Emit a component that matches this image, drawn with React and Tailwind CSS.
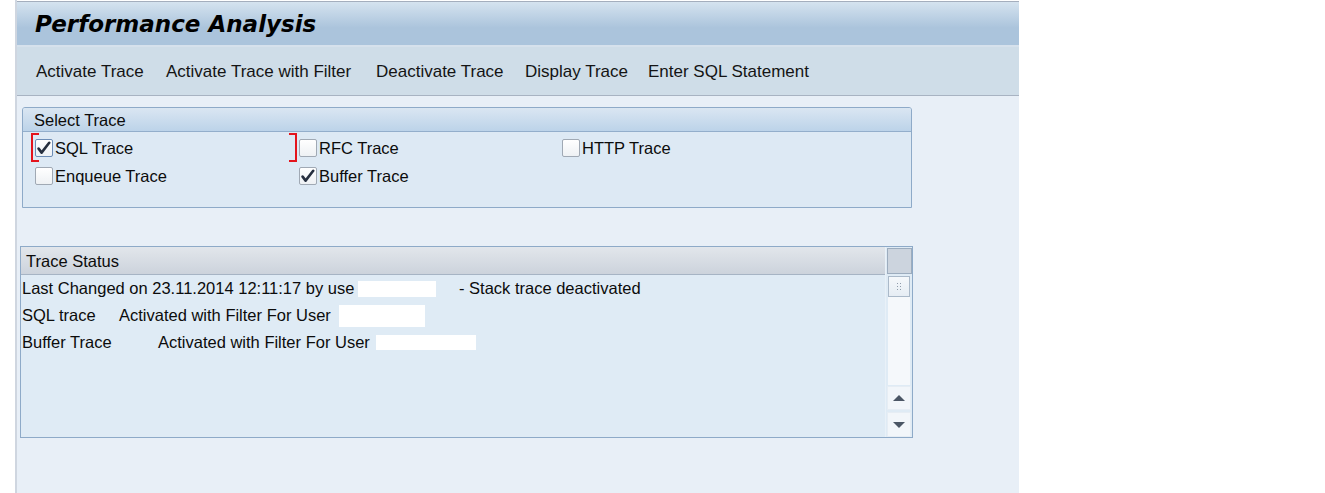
import React from "react";

function Check() {
  return (
    <svg width="14" height="14" viewBox="0 0 14 14" className="block">
      <path d="M1.6 7.6 L4.6 11.6 L12.2 1.8" fill="none" stroke="#262f3f" strokeWidth="2.6" strokeLinecap="round" strokeLinejoin="round" />
    </svg>
  );
}

function Checkbox({ checked, focused }) {
  return (
    <span
      className={
        focused
          ? "w-[18px] h-[18px] shrink-0 rounded-[2px] border border-[#6d8db6] bg-linear-to-b from-white to-[#edf1f5] flex items-center justify-center"
          : "w-[18px] h-[18px] shrink-0 rounded-[2px] border border-[#a0a9b4] bg-linear-to-b from-white to-[#eef1f4] flex items-center justify-center"
      }
    >
      {checked && <Check />}
    </span>
  );
}

function Option({ label, checked, focused }) {
  return (
    <div className="h-[18px] flex items-center">
      <Checkbox checked={checked} focused={focused} />
      <span className="ml-[2px] leading-[18px] whitespace-nowrap">{label}</span>
    </div>
  );
}

function Toolbar() {
  const items = [
    ["Activate Trace", "w-[130px]"],
    ["Activate Trace with Filter", "w-[210px]"],
    ["Deactivate Trace", "w-[149px]"],
    ["Display Trace", "w-[123px]"],
    ["Enter SQL Statement", "w-[200px]"],
  ];
  return (
    <div className="h-[49px] shrink-0 bg-[#cfdde8] border-b border-[#a8b3c2] flex items-center pl-[19px] pt-[1px] text-[#141414] text-[17px]">
      {items.map(([t, w]) => (
        <span key={t} className={w + " whitespace-nowrap leading-[20px]"}>
          {t}
        </span>
      ))}
    </div>
  );
}

function Scrollbar() {
  return (
    <div className="w-[27px] shrink-0 flex flex-col items-center border-l border-[#e9f1f8]">
      <div className="mt-[1px] h-[26px] w-[25px] border border-[#9cacbe] bg-[#ccd4de]" />
      <div className="mt-[2px] h-[21px] w-[22px] border border-[#aab9c9] bg-linear-to-b from-[#f5f8fb] to-[#e6edf4] flex items-center justify-center">
        <div className="grid grid-cols-2 gap-x-[2px] gap-y-[2px]">
          <span className="w-[1px] h-[1px] bg-[#8f9baa]" />
          <span className="w-[1px] h-[1px] bg-[#8f9baa]" />
          <span className="w-[1px] h-[1px] bg-[#8f9baa]" />
          <span className="w-[1px] h-[1px] bg-[#8f9baa]" />
          <span className="w-[1px] h-[1px] bg-[#8f9baa]" />
          <span className="w-[1px] h-[1px] bg-[#8f9baa]" />
        </div>
      </div>
      <div className="h-[88px] w-[22px] bg-[#f5f8fb]" />
      <div className="mt-[1px] h-[24px] w-[24px] bg-[#f2f6fa] border border-[#e6edf4] flex items-center justify-center">
        <svg width="12" height="6" viewBox="0 0 12 6" className="block">
          <path d="M0 6 L6 0 L12 6 Z" fill="#4b5665" />
        </svg>
      </div>
      <div className="mt-[2px] h-[25px] w-[24px] bg-[#f2f6fa] border border-[#e6edf4] flex items-center justify-center">
        <svg width="12" height="6" viewBox="0 0 12 6" className="block">
          <path d="M0 0 L12 0 L6 6 Z" fill="#4b5665" />
        </svg>
      </div>
    </div>
  );
}

export default function App() {
  return (
    <div className="w-[1325px] h-[493px] bg-white flex overflow-hidden font-['Liberation_Sans',Arial,sans-serif] text-[16.5px] text-[#0c0c0c]">
      <div className="w-[15px] shrink-0" />
      <div className="w-[1004px] shrink-0 h-full flex flex-col bg-[#e8eff7] border-l-2 border-[#cfd6e0]">
        <div className="h-[1px] shrink-0 bg-white" />
        <div className="h-[46px] shrink-0 border-t border-[#a4aebd] border-b-2 border-b-[#d6e1ec] bg-linear-to-b from-[#d5e3ef] to-[#abc4dc] to-60% flex items-center pl-[18px] pt-[1px]">
          <h1 className="font-['DejaVu_Sans',sans-serif] font-bold italic text-[23px] leading-[27px] text-black whitespace-nowrap">
            Performance Analysis
          </h1>
        </div>
        <Toolbar />

        {/* Select Trace */}
        <div className="ml-[5px] mt-[11px] w-[890px] h-[101px] shrink-0 border border-[#8eaac8] rounded-t-[3px] bg-[#dde9f4] flex flex-col">
          <div className="h-[24px] shrink-0 border-b border-[#93aecb] bg-linear-to-b from-[#dae6f2] to-[#bcd3e9] rounded-t-[2px] pl-[11px] flex items-center leading-[20px]">
            Select Trace
          </div>
          <div className="relative pt-[7px] pl-[12px]">
            <div className="grid grid-cols-[264px_263px_264px] gap-y-[10px]">
              <Option label="SQL Trace" checked focused />
              <Option label="RFC Trace" />
              <Option label="HTTP Trace" />
              <Option label="Enqueue Trace" />
              <Option label="Buffer Trace" checked />
            </div>
            {/* focus brackets */}
            <div className="absolute left-[8px] top-[1px] w-[266px] h-[29px] pointer-events-none">
              <div className="absolute left-0 top-0 w-[2px] h-full bg-[#e4141c]" />
              <div className="absolute left-0 top-0 w-[8px] h-[2px] bg-[#e4141c]" />
              <div className="absolute left-0 bottom-0 w-[8px] h-[2px] bg-[#e4141c]" />
              <div className="absolute right-0 top-0 w-[2px] h-full bg-[#e4141c]" />
              <div className="absolute right-0 top-0 w-[8px] h-[2px] bg-[#e4141c]" />
              <div className="absolute right-0 bottom-0 w-[8px] h-[2px] bg-[#e4141c]" />
            </div>
          </div>
        </div>

        {/* Trace Status */}
        <div className="ml-[3px] mt-[38px] w-[893px] h-[192px] shrink-0 border border-[#8eaac8] bg-[#dfebf5] flex">
          <div className="w-[864px] shrink-0 flex flex-col">
            <div className="h-[28px] shrink-0 border-b border-[#a6b4c4] bg-linear-to-b from-[#e2e6eb] to-[#ccd3dc] pl-[5px] flex items-center leading-[20px]">
              Trace Status
            </div>
            <div className="h-[27px] flex items-center pl-[1px] whitespace-nowrap">
              <span className="w-[336px] shrink-0">Last Changed on 23.11.2014 12:11:17 by use</span>
              <span className="w-[78px] h-[16px] bg-white shrink-0" />
              <span className="ml-[23px]">- Stack trace deactivated</span>
            </div>
            <div className="h-[27px] flex items-center pl-[1px] whitespace-nowrap">
              <span className="w-[97px] shrink-0">SQL trace</span>
              <span className="w-[220px] shrink-0">Activated with Filter For User</span>
              <span className="w-[86px] h-[22px] bg-white shrink-0" />
            </div>
            <div className="h-[27px] flex items-center pl-[1px] whitespace-nowrap">
              <span className="w-[136px] shrink-0">Buffer Trace</span>
              <span className="w-[218px] shrink-0">Activated with Filter For User</span>
              <span className="w-[100px] h-[15px] bg-white shrink-0" />
            </div>
          </div>
          <Scrollbar />
        </div>
      </div>
    </div>
  );
}
